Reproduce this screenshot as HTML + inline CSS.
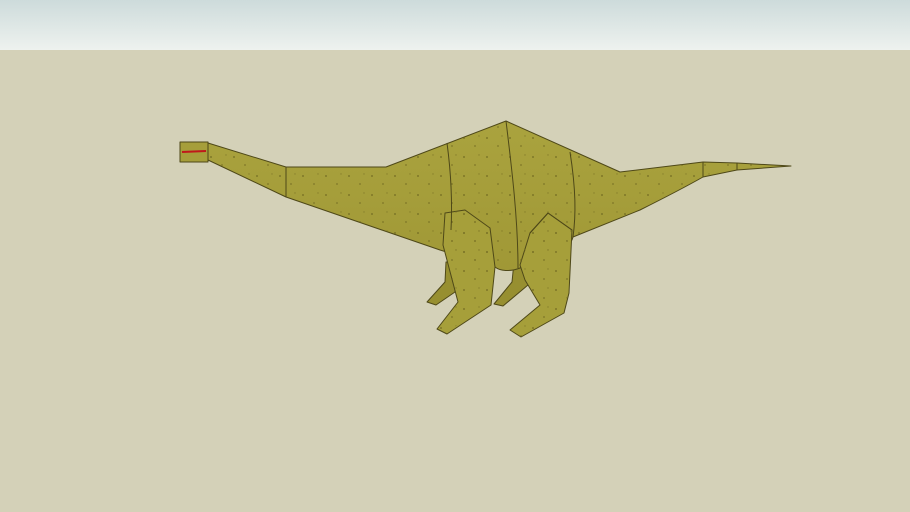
<!DOCTYPE html>
<html><head><style>
html,body{margin:0;padding:0;width:910px;height:512px;overflow:hidden;background:#d4d1b8}
svg{display:block}
</style></head><body>
<svg width="910" height="512" viewBox="0 0 910 512" xmlns="http://www.w3.org/2000/svg">
<defs>
<linearGradient id="sky" x1="0" y1="0" x2="0" y2="1">
<stop offset="0" stop-color="#cddbdb"/><stop offset="1" stop-color="#eef2ef"/>
</linearGradient>
<linearGradient id="skin" x1="0" y1="0" x2="0" y2="1">
<stop offset="0" stop-color="#aaa33e"/><stop offset="1" stop-color="#a09836"/>
</linearGradient>
<pattern id="dots" width="23" height="19" patternUnits="userSpaceOnUse">
<circle cx="4" cy="5" r="1" fill="#6d6620"/><circle cx="15" cy="13" r="0.9" fill="#6d6620"/><circle cx="19" cy="3" r="0.7" fill="#7a7225"/>
</pattern>
</defs>
<rect x="0" y="0" width="910" height="50" fill="url(#sky)"/>
<rect x="0" y="50" width="910" height="462" fill="#d4d1b8"/>
<g stroke="#4e4818" stroke-width="1" stroke-linejoin="round">
<path d="M455,262 L455,292 L436,305 L427,302 L445,282 L446,262 Z" fill="#978f30"/>
<path d="M528,262 L528,285 L503,306 L494,304 L512,282 L514,262 Z" fill="#978f30"/>
<path d="M208,143 L286,167 L386,167 L506,121 L620,172 L703,162 L737,163 L791,166 L737,170 L703,177 C680,190 660,200 640,210 L573,237 L572,240 L520,268 C510,272 500,271 495,267 L440,250 L286,197 L208,160 Z" fill="url(#skin)"/>
<path d="M445,213 L465,210 L490,228 L495,267 L491,305 L447,334 L437,329 L458,302 L443,245 Z" fill="#a69f3a"/>
<path d="M520,265 L530,233 L548,213 L572,230 L569,293 L564,313 L521,337 L510,330 L540,305 L525,280 Z" fill="#a69f3a"/>
<rect x="180" y="142" width="28" height="20" fill="#a69e3a"/>
</g>
<g fill="url(#dots)" opacity="0.7">
<path d="M208,143 L286,167 L386,167 L506,121 L620,172 L703,162 L737,163 L791,166 L737,170 L703,177 L640,210 L573,237 L520,268 L495,267 L440,250 L286,197 L208,160 Z"/>
<path d="M445,213 L465,210 L490,228 L495,267 L490,305 L445,333 L437,329 L458,302 L443,245 Z"/>
<path d="M520,265 L530,233 L548,213 L572,230 L568,293 L563,313 L520,337 L510,330 L540,305 L525,280 Z"/>
</g>
<g stroke="#4e4818" stroke-width="1" fill="none">
<path d="M286,167 L286,197"/>
<path d="M447,143 C452,180 452,210 451,230"/>
<path d="M506,121 C512,170 518,220 518,268"/>
<path d="M570,152 C576,190 576,215 573,237"/>
<path d="M530,233 L548,213 L572,230"/>
<path d="M703,162 L703,177"/>
<path d="M737,163 L737,170"/>
<path d="M208,143 L208,160"/>
</g>
<line x1="182" y1="152" x2="206" y2="151" stroke="#c0181a" stroke-width="2"/>
</svg>
</body></html>
